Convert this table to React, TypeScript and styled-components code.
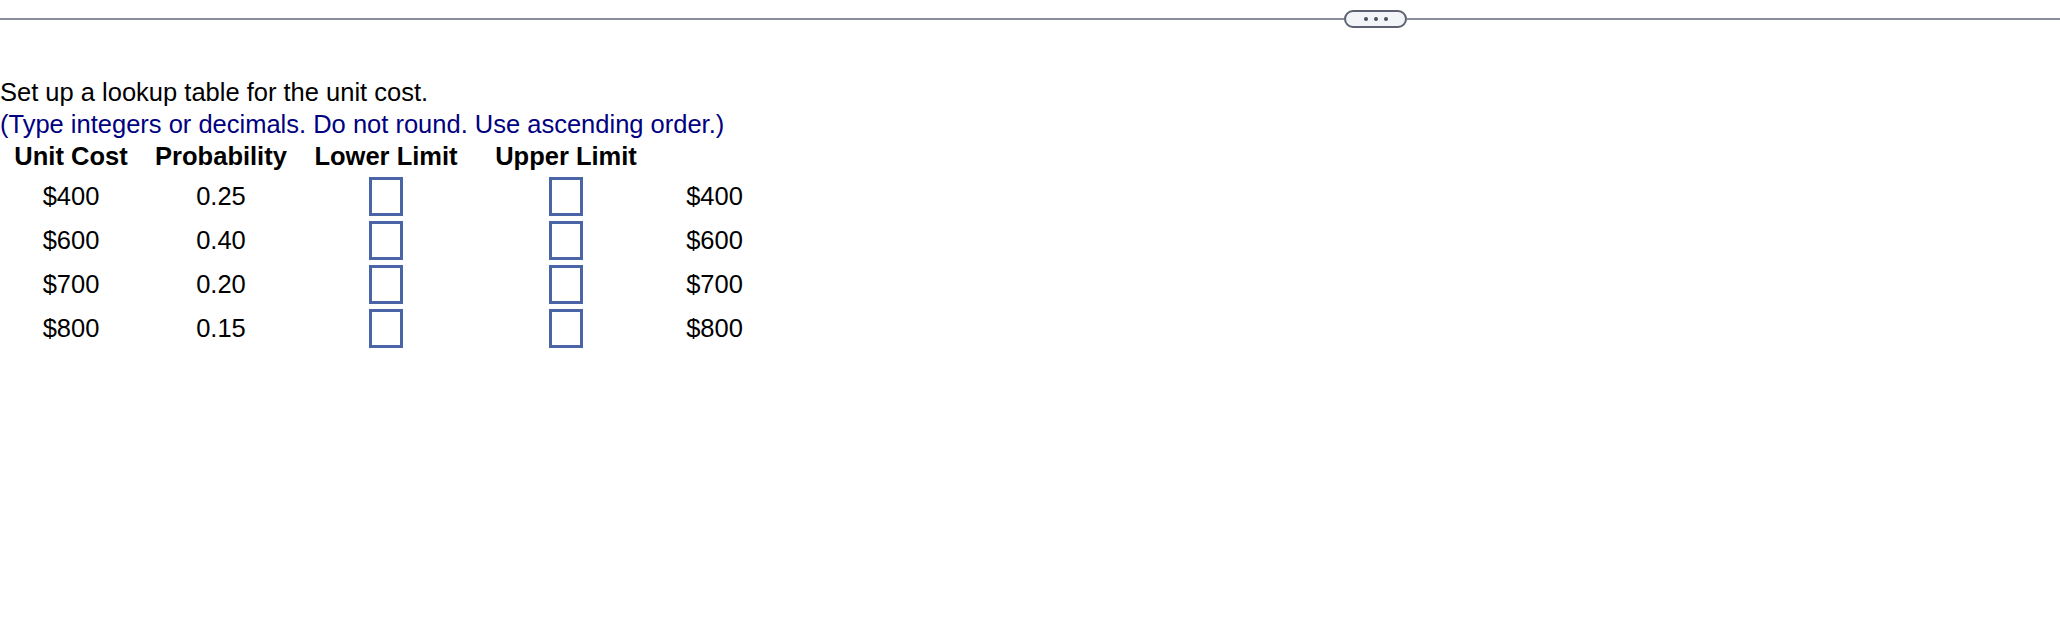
import React from 'react';
import styled, { createGlobalStyle } from 'styled-components';

const GlobalStyle = createGlobalStyle`
  body {
    margin: 0;
    background: #fff;
    font-family: 'Liberation Sans', Arial, sans-serif;
    color: #000;
  }
`;

interface IRow {
  id: number;
  cost: string;
  probability: string;
}

const rows: IRow[] = [
  { id: 1, cost: '$400', probability: '0.25' },
  { id: 2, cost: '$600', probability: '0.40' },
  { id: 3, cost: '$700', probability: '0.20' },
  { id: 4, cost: '$800', probability: '0.15' },
];

const columns = '142px 158px 172px 188px 109px';

const Style = {
  Divider: styled.div`
    display: flex;
    align-items: center;
    height: 18px;
    margin-top: 10px;
  `,
  Line: styled.div<{ $width?: number }>`
    height: 2px;
    background: #8a8e99;
    flex: ${({ $width }) => ($width ? `0 0 ${$width}px` : '1 1 auto')};
  `,
  Pill: styled.button`
    box-sizing: border-box;
    flex: 0 0 63px;
    height: 18px;
    padding: 0;
    border: 2px solid #5b6170;
    border-radius: 9px;
    background: #f3f4f7;
    display: flex;
    align-items: center;
    justify-content: center;
    gap: 6px;
    > span {
      width: 4px;
      height: 4px;
      border-radius: 50%;
      background: #4b5060;
    }
  `,
  Content: styled.div`
    margin-top: 48px;
    font-size: 25.5px;
    line-height: 32px;
  `,
  Prompt: styled.p`
    margin: 0;
  `,
  Hint: styled.p`
    margin: 0;
    color: #000080;
  `,
  Table: styled.div`
    width: 769px;
  `,
  Head: styled.div`
    display: grid;
    grid-template-columns: ${columns};
    height: 32px;
    line-height: 32px;
    margin-bottom: 2px;
    font-weight: 700;
    text-align: center;
  `,
  Row: styled.div`
    display: grid;
    grid-template-columns: ${columns};
    height: 44px;
    align-items: center;
    text-align: center;
  `,
  Cell: styled.div`
    display: flex;
    justify-content: center;
  `,
  Input: styled.input`
    box-sizing: border-box;
    width: 34px;
    height: 39px;
    margin: 0;
    padding: 0;
    border: 3px solid #4a64a8;
    border-radius: 0;
    background: #fff;
    outline: none;
  `,
};

const App = () => {
  return (
    <>
      <GlobalStyle />
      <Style.Divider>
        <Style.Line $width={1344} />
        <Style.Pill aria-label="More">
          <span />
          <span />
          <span />
        </Style.Pill>
        <Style.Line />
      </Style.Divider>
      <Style.Content>
        <Style.Prompt>Set up a lookup table for the unit cost.</Style.Prompt>
        <Style.Hint>
          (Type integers or decimals. Do not round. Use ascending order.)
        </Style.Hint>
        <Style.Table>
          <Style.Head>
            <div>Unit Cost</div>
            <div>Probability</div>
            <div>Lower Limit</div>
            <div>Upper Limit</div>
            <div />
          </Style.Head>
          {rows.map((row) => (
            <Style.Row key={row.id}>
              <Style.Cell>{row.cost}</Style.Cell>
              <Style.Cell>{row.probability}</Style.Cell>
              <Style.Cell>
                <Style.Input type="text" aria-label="Lower limit" />
              </Style.Cell>
              <Style.Cell>
                <Style.Input type="text" aria-label="Upper limit" />
              </Style.Cell>
              <Style.Cell>{row.cost}</Style.Cell>
            </Style.Row>
          ))}
        </Style.Table>
      </Style.Content>
    </>
  );
};

export default App;
